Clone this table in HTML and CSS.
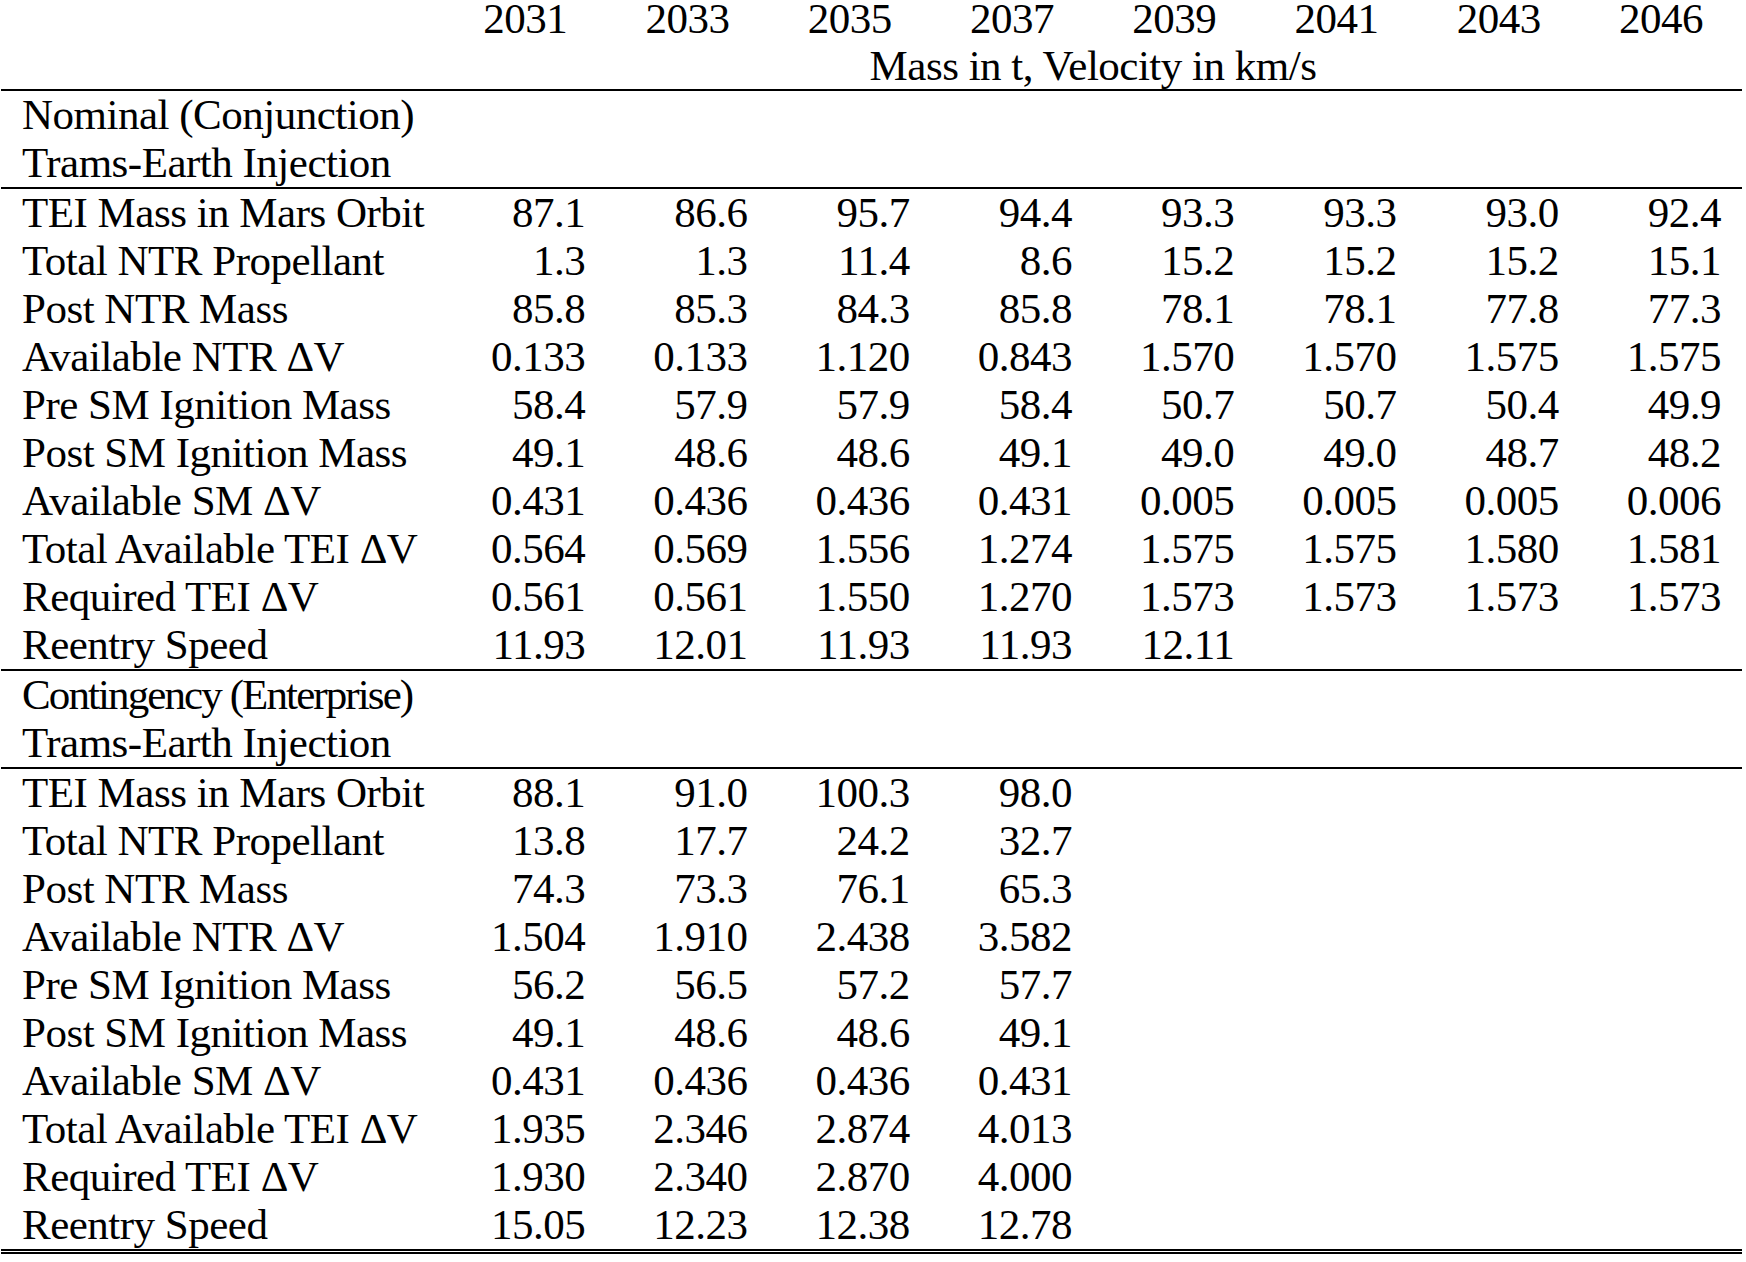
FILE: index.html
```html
<!DOCTYPE html>
<html lang="en">
<head>
<meta charset="utf-8">
<title>Trans-Earth Injection</title>
<link rel="stylesheet" href="styles.css">
</head>
<body>
<table class="tei">
  <colgroup>
    <col class="col-label">
    <col class="col-year"><col class="col-year"><col class="col-year"><col class="col-year">
    <col class="col-year"><col class="col-year"><col class="col-year"><col class="col-year">
  </colgroup>
  <thead>
    <tr class="years">
      <th class="label"></th>
      <th>2031</th><th>2033</th><th>2035</th><th>2037</th><th>2039</th><th>2041</th><th>2043</th><th>2046</th>
    </tr>
    <tr class="units ruled">
      <th class="label"></th>
      <th colspan="8">Mass in t, Velocity in km/s</th>
    </tr>
  </thead>
  <tbody>
    <tr class="section"><td class="label" colspan="9">Nominal (Conjunction)</td></tr>
    <tr class="section ruled"><td class="label" colspan="9">Trams-Earth Injection</td></tr>
  </tbody>
  <tbody class="values">
    <tr><td class="label">TEI Mass in Mars Orbit</td><td>87.1</td><td>86.6</td><td>95.7</td><td>94.4</td><td>93.3</td><td>93.3</td><td>93.0</td><td>92.4</td></tr>
    <tr><td class="label">Total NTR Propellant</td><td>1.3</td><td>1.3</td><td>11.4</td><td>8.6</td><td>15.2</td><td>15.2</td><td>15.2</td><td>15.1</td></tr>
    <tr><td class="label">Post NTR Mass</td><td>85.8</td><td>85.3</td><td>84.3</td><td>85.8</td><td>78.1</td><td>78.1</td><td>77.8</td><td>77.3</td></tr>
    <tr><td class="label">Available NTR ΔV</td><td>0.133</td><td>0.133</td><td>1.120</td><td>0.843</td><td>1.570</td><td>1.570</td><td>1.575</td><td>1.575</td></tr>
    <tr><td class="label">Pre SM Ignition Mass</td><td>58.4</td><td>57.9</td><td>57.9</td><td>58.4</td><td>50.7</td><td>50.7</td><td>50.4</td><td>49.9</td></tr>
    <tr><td class="label">Post SM Ignition Mass</td><td>49.1</td><td>48.6</td><td>48.6</td><td>49.1</td><td>49.0</td><td>49.0</td><td>48.7</td><td>48.2</td></tr>
    <tr><td class="label">Available SM ΔV</td><td>0.431</td><td>0.436</td><td>0.436</td><td>0.431</td><td>0.005</td><td>0.005</td><td>0.005</td><td>0.006</td></tr>
    <tr><td class="label">Total Available TEI ΔV</td><td>0.564</td><td>0.569</td><td>1.556</td><td>1.274</td><td>1.575</td><td>1.575</td><td>1.580</td><td>1.581</td></tr>
    <tr><td class="label">Required TEI ΔV</td><td>0.561</td><td>0.561</td><td>1.550</td><td>1.270</td><td>1.573</td><td>1.573</td><td>1.573</td><td>1.573</td></tr>
    <tr class="ruled"><td class="label">Reentry Speed</td><td>11.93</td><td>12.01</td><td>11.93</td><td>11.93</td><td>12.11</td><td></td><td></td><td></td></tr>
  </tbody>
  <tbody>
    <tr class="section"><td class="label narrow" colspan="9">Contingency (Enterprise)</td></tr>
    <tr class="section ruled"><td class="label" colspan="9">Trams-Earth Injection</td></tr>
  </tbody>
  <tbody class="values">
    <tr><td class="label">TEI Mass in Mars Orbit</td><td>88.1</td><td>91.0</td><td>100.3</td><td>98.0</td><td></td><td></td><td></td><td></td></tr>
    <tr><td class="label">Total NTR Propellant</td><td>13.8</td><td>17.7</td><td>24.2</td><td>32.7</td><td></td><td></td><td></td><td></td></tr>
    <tr><td class="label">Post NTR Mass</td><td>74.3</td><td>73.3</td><td>76.1</td><td>65.3</td><td></td><td></td><td></td><td></td></tr>
    <tr><td class="label">Available NTR ΔV</td><td>1.504</td><td>1.910</td><td>2.438</td><td>3.582</td><td></td><td></td><td></td><td></td></tr>
    <tr><td class="label">Pre SM Ignition Mass</td><td>56.2</td><td>56.5</td><td>57.2</td><td>57.7</td><td></td><td></td><td></td><td></td></tr>
    <tr><td class="label">Post SM Ignition Mass</td><td>49.1</td><td>48.6</td><td>48.6</td><td>49.1</td><td></td><td></td><td></td><td></td></tr>
    <tr><td class="label">Available SM ΔV</td><td>0.431</td><td>0.436</td><td>0.436</td><td>0.431</td><td></td><td></td><td></td><td></td></tr>
    <tr><td class="label">Total Available TEI ΔV</td><td>1.935</td><td>2.346</td><td>2.874</td><td>4.013</td><td></td><td></td><td></td><td></td></tr>
    <tr><td class="label">Required TEI ΔV</td><td>1.930</td><td>2.340</td><td>2.870</td><td>4.000</td><td></td><td></td><td></td><td></td></tr>
    <tr class="final"><td class="label">Reentry Speed</td><td>15.05</td><td>12.23</td><td>12.38</td><td>12.78</td><td></td><td></td><td></td><td></td></tr>
  </tbody>
</table>
</body>
</html>
```

FILE: styles.css
```css
html, body {
  margin: 0;
  padding: 0;
  background: #ffffff;
}

body {
  font-family: "Liberation Serif", "Times New Roman", serif;
  font-size: 43px;
  letter-spacing: -0.5px;
  color: #000000;
}

.tei {
  table-layout: fixed;
  width: 1741px;
  margin-left: 1px;
  border-collapse: separate;
  border-spacing: 0;
}

.col-label {
  width: 443px;
}

.col-year {
  width: 162.25px;
}

.tei th,
.tei td {
  padding: 0 21px;
  line-height: 48px;
  white-space: nowrap;
  font-weight: normal;
  text-align: right;
  vertical-align: top;
}

.tei .label {
  text-align: left;
  padding-left: 21px;
  padding-right: 0;
}

.tei .narrow {
  letter-spacing: -1.9px;
}

.years th {
  text-align: center;
  line-height: 38px;
  padding-bottom: 5px;
}

.units th {
  text-align: center;
  line-height: 46px;
}

.ruled th,
.ruled td {
  border-bottom: 2px solid #000000;
}

.final td {
  border-bottom: 5px double #000000;
}
```
